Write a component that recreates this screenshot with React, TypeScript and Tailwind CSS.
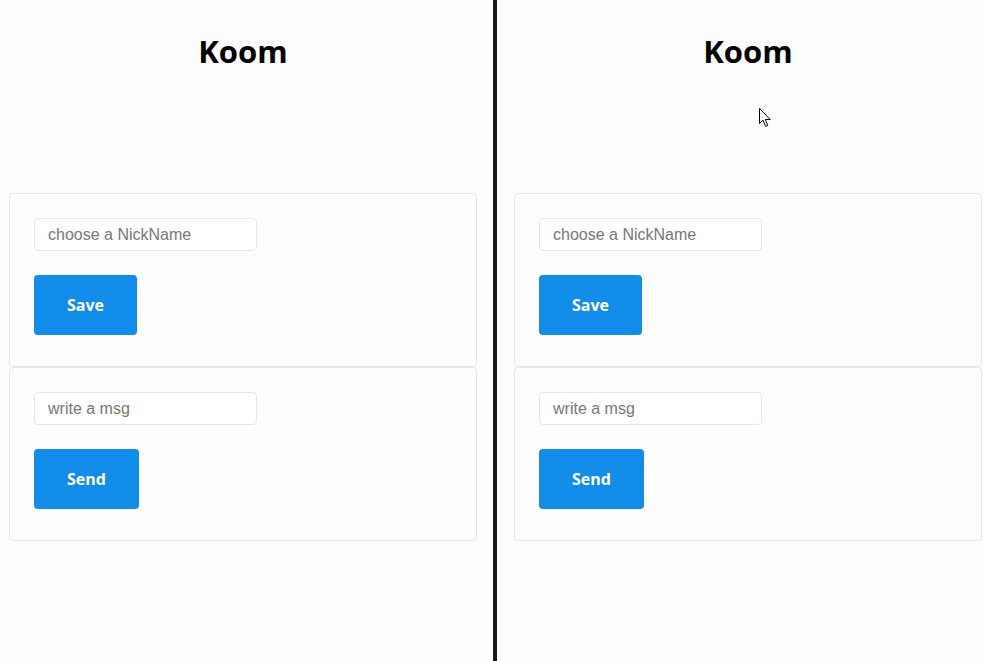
import React from "react";

function Card({ placeholder, label }: { placeholder: string; label: string }) {
  return (
    <div className="border border-[#e6e6e6] rounded-[4px] pt-[24px] pb-[31px] px-[24px] flex flex-col items-start gap-[24px] bg-[#fdfdfd]">
      <input
        placeholder={placeholder}
        className="w-[223px] h-[33px] border border-[#e6e6e6] rounded-[4px] pl-[13px] text-[16px] bg-white outline-none placeholder:text-[#777] [font-family:'Liberation_Sans',Arial,sans-serif]"
      />
      <button className="h-[60px] px-[33px] rounded-[4px] bg-[#128ce9] text-white text-[16px] font-bold [font-family:'Open_Sans',sans-serif]">
        {label}
      </button>
    </div>
  );
}

function Pane({ padLeft }: { padLeft: string }) {
  return (
    <div className={`h-full ${padLeft}`}>
      <div className="w-[468px] flex flex-col">
        <h1 className="pt-[30px] text-center text-[31px] leading-[43px] font-bold text-black [font-family:'Open_Sans',sans-serif]">
          Koom
        </h1>
        <div className="mt-[120px] flex flex-col">
          <Card placeholder="choose a NickName" label="Save" />
          <Card placeholder="write a msg" label="Send" />
        </div>
      </div>
    </div>
  );
}

export default function App() {
  return (
    <div className="relative w-[986px] h-[661px] flex bg-[#fdfdfd] overflow-hidden">
      <div className="w-[493px] h-full">
        <Pane padLeft="pl-[9px]" />
      </div>
      <div className="w-[4px] h-full bg-[#1c1c1c]" />
      <div className="flex-1 h-full">
        <Pane padLeft="pl-[17px]" />
      </div>
      <svg
        className="absolute left-[759px] top-[108px]"
        width="13"
        height="20"
        viewBox="0 0 13 20"
      >
        <path
          d="M0.5 0.5 L0.5 15.5 L4 12.2 L6.6 18.4 L8.8 17.5 L6.3 11.5 L11.2 11.5 Z"
          fill="white"
          stroke="black"
          strokeWidth="1"
          strokeLinejoin="miter"
        />
      </svg>
    </div>
  );
}
